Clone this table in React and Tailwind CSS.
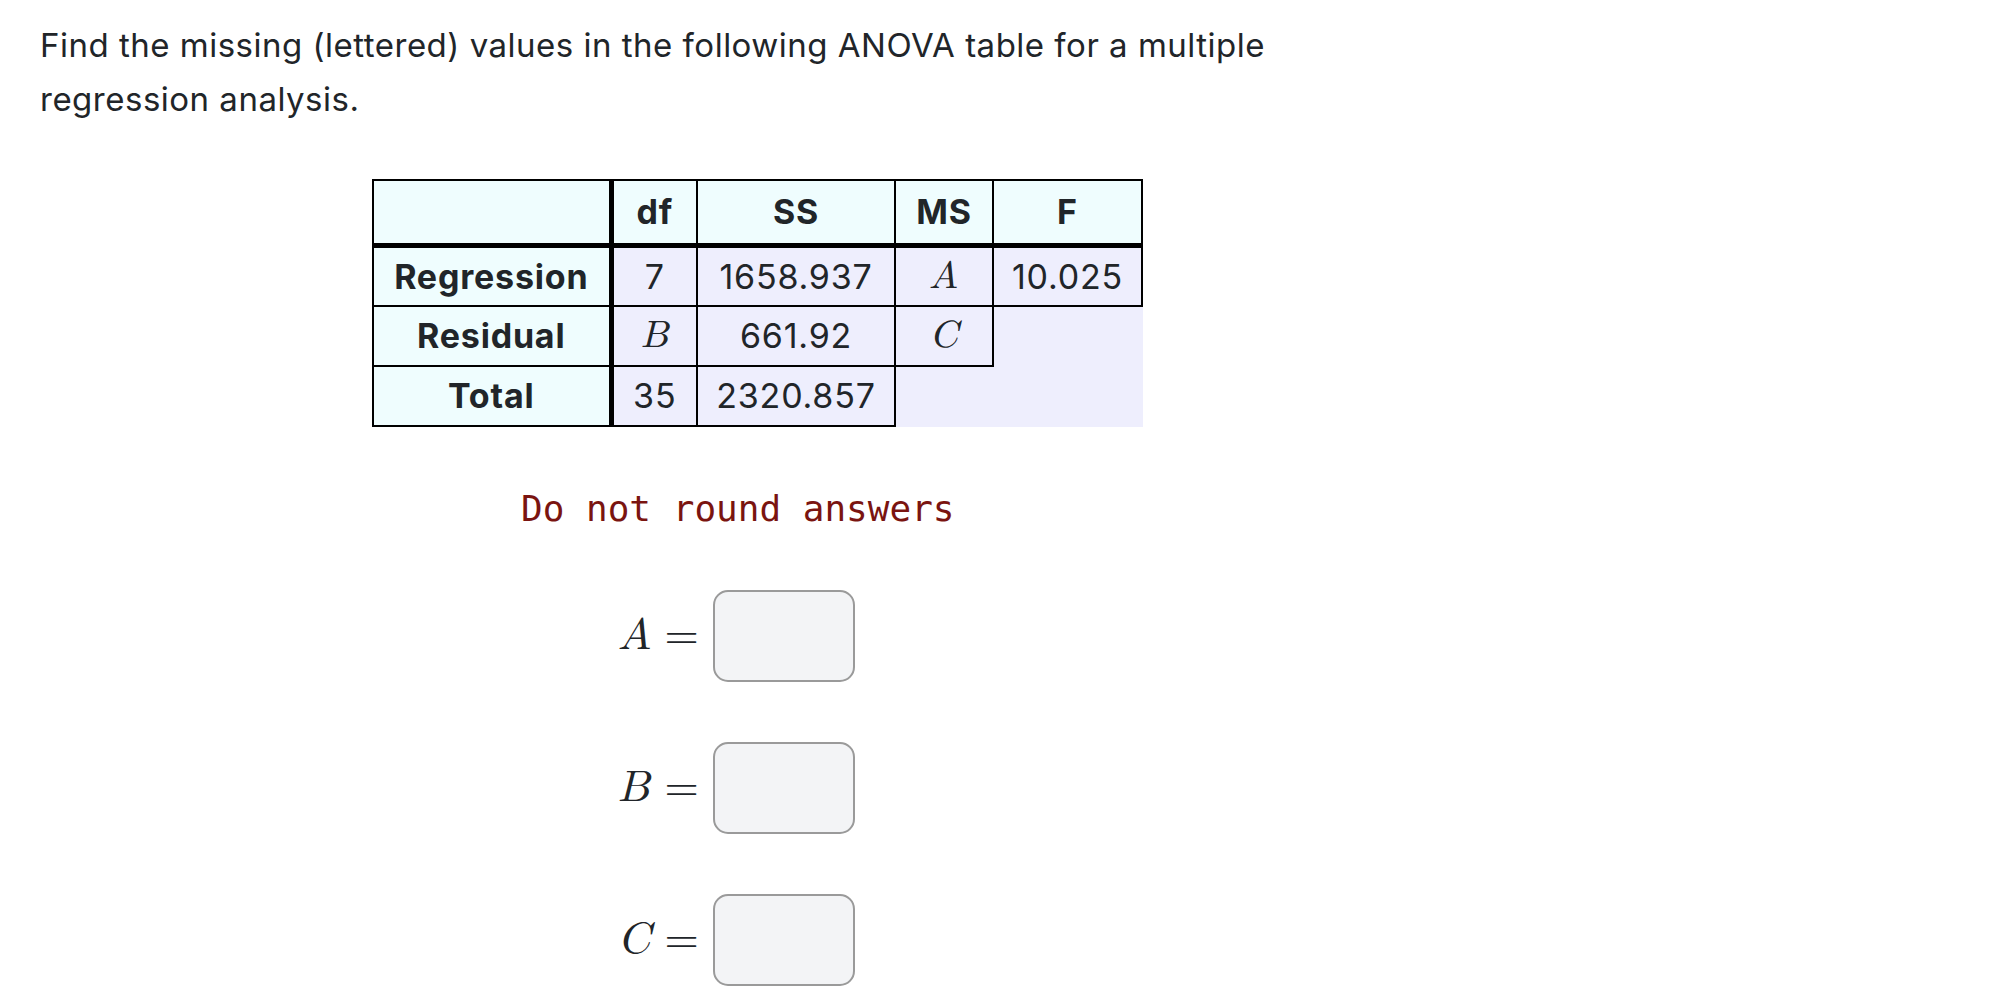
export default function App() {
  const cyan = "bg-[#effdfe]";
  const math = { fontFamily: '"Latin Modern Math","DejaVu Serif","Liberation Serif",serif' };
  const inputs = ["A", "B", "C"];
  return (
    <div className="min-h-screen bg-white text-[#212529]" style={{ fontFamily: 'Inter, "Noto Sans", sans-serif' }}>
      <p className="pl-[40px] pt-[18px] w-[1330px] text-[33px] leading-[54px] tracking-[0.5px]">
        Find the missing (lettered) values in the following ANOVA table for a multiple regression analysis.
      </p>
      <div className="mt-[53px] ml-[372px]">
        <table className="border-collapse bg-[#eeeefd] text-[34px] tracking-[0.8px] text-center">
          <tbody>
            <tr className="h-[65px]">
              <th className={`${cyan} border-2 border-b-[5px] border-r-[5px] border-black w-[238px]`}></th>
              <th className={`${cyan} border-2 border-b-[5px] border-black w-[86px] font-bold`}>df</th>
              <th className={`${cyan} border-2 border-b-[5px] border-black w-[198px] font-bold`}>SS</th>
              <th className={`${cyan} border-2 border-b-[5px] border-black w-[98px] font-bold`}>MS</th>
              <th className={`${cyan} border-2 border-b-[5px] border-black w-[149px] font-bold`}>F</th>
            </tr>
            <tr className="h-[60px]">
              <th className={`${cyan} border-2 border-r-[5px] border-black font-bold`}>Regression</th>
              <td className="border-2 border-black">7</td>
              <td className="border-2 border-black">1658.937</td>
              <td className="border-2 border-black italic text-[38px]" style={math}>A</td>
              <td className="border-2 border-black">10.025</td>
            </tr>
            <tr className="h-[60px]">
              <th className={`${cyan} border-2 border-r-[5px] border-black font-bold`}>Residual</th>
              <td className="border-2 border-black italic text-[38px]" style={math}>B</td>
              <td className="border-2 border-black">661.92</td>
              <td className="border-2 border-black italic text-[38px]" style={math}>C</td>
              <td className="border-0"></td>
            </tr>
            <tr className="h-[60px]">
              <th className={`${cyan} border-2 border-r-[5px] border-black font-bold`}>Total</th>
              <td className="border-2 border-black">35</td>
              <td className="border-2 border-black">2320.857</td>
              <td className="border-0"></td>
              <td className="border-0"></td>
            </tr>
          </tbody>
        </table>
      </div>
      <div
        className="mt-[55px] ml-[521px] text-[36px] leading-[54px] text-[#7a1410]"
        style={{ fontFamily: '"DejaVu Sans Mono", "Liberation Mono", monospace' }}
      >
        Do not round answers
      </div>
      <div className="mt-[54px] flex flex-col gap-[60px]">
        {inputs.map((l) => (
          <div key={l} className="flex items-center ml-[618px]">
            <span className="w-[44px] text-[44px] italic leading-none" style={math}>{l}</span>
            <span className="w-[39px] text-center text-[44px] leading-none" style={math}>=</span>
            <div className="ml-[12px] w-[142px] h-[92px] rounded-[15px] border-2 border-[#9a9a9a] bg-[#f3f4f6]"></div>
          </div>
        ))}
      </div>
    </div>
  );
}
